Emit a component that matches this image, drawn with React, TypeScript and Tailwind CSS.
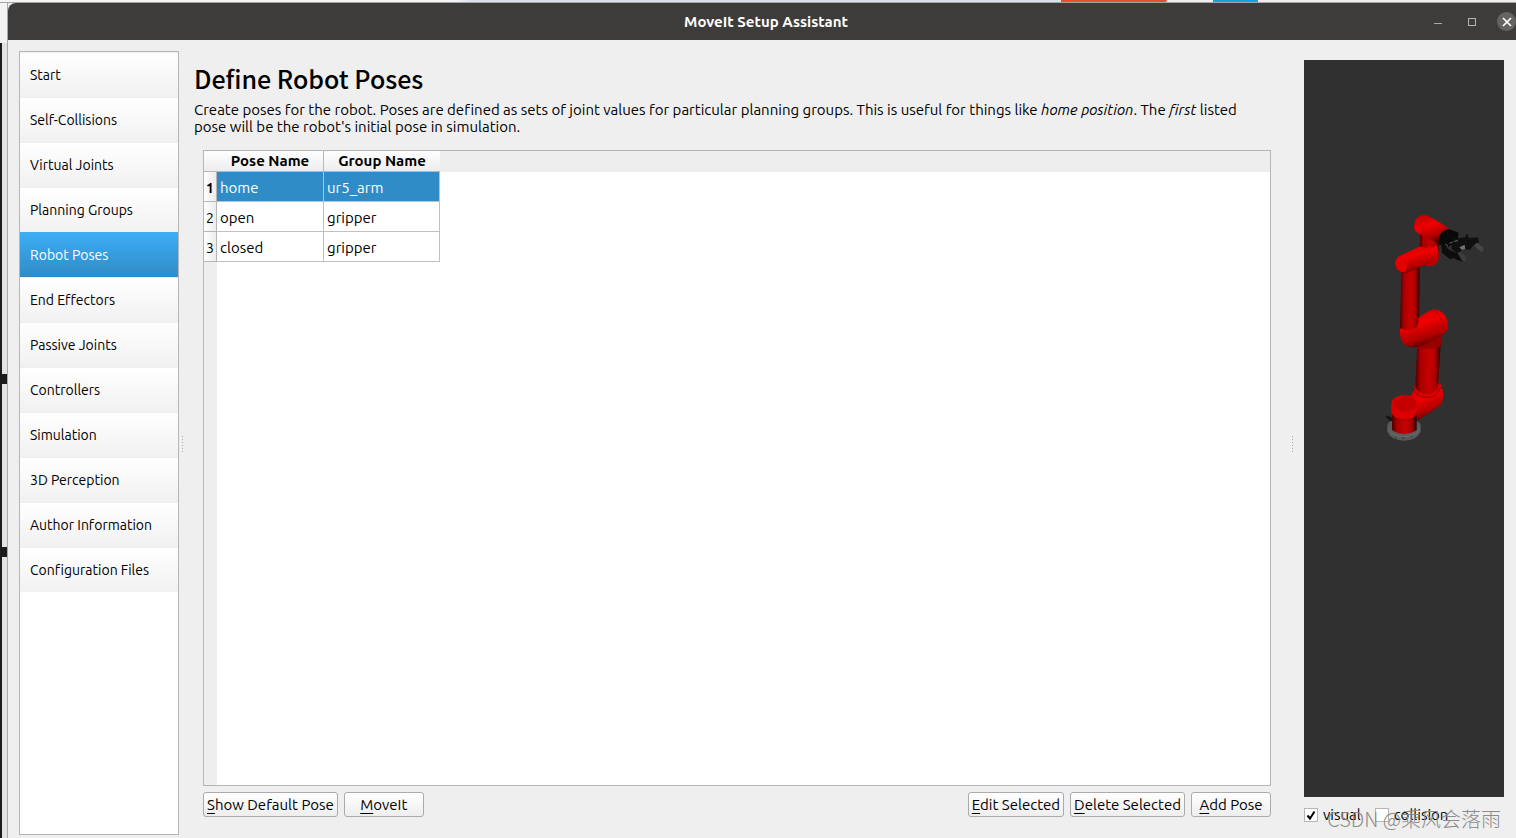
import { useState } from 'react'
import { clsx } from 'clsx'

const steps = [
  'Start',
  'Self-Collisions',
  'Virtual Joints',
  'Planning Groups',
  'Robot Poses',
  'End Effectors',
  'Passive Joints',
  'Controllers',
  'Simulation',
  '3D Perception',
  'Author Information',
  'Configuration Files',
]

const poses = [
  { name: 'home', group: 'ur5_arm' },
  { name: 'open', group: 'gripper' },
  { name: 'closed', group: 'gripper' },
]

function TitleBar() {
  return (
    <header className="grid h-[37px] shrink-0 grid-cols-[1fr_auto_1fr] items-center rounded-tl-lg bg-[#3e3c3a] pl-2">
      <span />
      <h1 className="pt-px text-[15px] font-bold text-white">MoveIt Setup Assistant</h1>
      <div className="flex items-center justify-end">
        <button aria-label="Minimize" className="flex size-[34px] items-center justify-center">
          <span className="mt-1 h-px w-2 bg-[#a9a8a7]" />
        </button>
        <button aria-label="Maximize" className="flex size-[34px] items-center justify-center">
          <span className="size-2 border border-[#b5b4b3]" />
        </button>
        <button aria-label="Close" className="ml-2 flex size-[19px] items-center justify-center rounded-full bg-[#656463]">
          <svg viewBox="0 0 10 10" className="size-[10px]" stroke="#fff" strokeWidth="1.7">
            <path d="M1 1l8 8M9 1l-8 8" />
          </svg>
        </button>
      </div>
    </header>
  )
}

function StepList({ active, onSelect }: { active: string; onSelect: (s: string) => void }) {
  return (
    <nav className="w-40 shrink-0 border border-[#b6b6b6] bg-white">
      <ul>
        {steps.map(step => (
          <li key={step}>
            <button
              onClick={() => onSelect(step)}
              className={clsx(
                'block h-[45px] w-full px-[10px] text-left text-sm',
                step === active
                  ? 'bg-linear-to-b from-[#3daef5] to-[#308cc6] text-white'
                  : 'border-t border-[#eee] bg-linear-to-b from-white to-[#f1f1f1]',
              )}
            >
              {step}
            </button>
          </li>
        ))}
      </ul>
    </nav>
  )
}

function SplitHandle() {
  return (
    <div className="flex w-[7px] shrink-0 flex-col items-center justify-center gap-[2px] pt-[2px]">
      {[0, 1, 2, 3, 4, 5].map(i => (
        <span key={i} className="size-px bg-[#a8a8a8]" />
      ))}
    </div>
  )
}

function PoseTable() {
  const [selected, setSelected] = useState(0)
  return (
    <div className="flex-1 border border-[#b6b6b6] bg-white bg-[linear-gradient(#eee,#eee),linear-gradient(#eee,#eee)] bg-[length:100%_21px,13px_100%] bg-no-repeat">
      <table className="w-[236px] table-fixed border-separate border-spacing-0 text-[15px] leading-5">
        <colgroup>
          <col className="w-[13px]" />
          <col className="w-[107px]" />
          <col className="w-[116px]" />
        </colgroup>
        <thead>
          <tr className="h-[21px] bg-linear-to-b from-white to-[#ececec]">
            <th className="border-b border-[#b6b6b6] p-0" />
            <th className="border-r border-b border-[#b6b6b6] p-0">Pose Name</th>
            <th className="border-b border-[#b6b6b6] p-0">Group Name</th>
          </tr>
        </thead>
        <tbody>
          {poses.map((pose, i) => (
            <tr
              key={pose.name}
              onClick={() => setSelected(i)}
              className={clsx('h-[30px]', i === selected && 'text-white')}
            >
              <th
                className={clsx(
                  'border-r border-b border-[#b6b6b6] bg-linear-to-r from-white to-[#ececec] px-0 pt-[2px] pb-0 text-sm text-black',
                  i === selected ? 'font-bold' : 'font-normal',
                )}
              >
                {i + 1}
              </th>
              <td
                className={clsx(
                  'border-r border-b border-[#c0c0c0] px-[3px] pt-[2px] pb-0',
                  i === selected && 'bg-[#308cc6]',
                )}
              >
                {pose.name}
              </td>
              <td
                className={clsx(
                  'border-r border-b border-[#c0c0c0] px-[3px] pt-[2px] pb-0',
                  i === selected && 'bg-[#308cc6]',
                )}
              >
                {pose.group}
              </td>
            </tr>
          ))}
        </tbody>
      </table>
    </div>
  )
}

function PushButton({ label }: { label: string }) {
  return (
    <button className="h-[25px] min-w-20 rounded-[3px] border border-[#ababab] bg-linear-to-b from-white to-[#eeeeee] px-[3px] pt-px text-[15px] whitespace-nowrap">
      <span className="underline underline-offset-3">{label[0]}</span>
      {label.slice(1)}
    </button>
  )
}

function RobotView() {
  return (
    <div className="min-h-0 flex-1 bg-[#303030]">
      <svg viewBox="0 0 200 737" className="h-full w-full" role="img" aria-label="Robot model">
        <defs>
          <linearGradient id="link" x1="0" x2="1" y1="0" y2="0">
            <stop offset="0" stopColor="#4a0000" />
            <stop offset="0.2" stopColor="#a80000" />
            <stop offset="0.55" stopColor="#c80000" />
            <stop offset="0.8" stopColor="#a80000" />
            <stop offset="1" stopColor="#200000" />
          </linearGradient>
          <linearGradient id="joint" x1="0.3" x2="0.7" y1="0" y2="1">
            <stop offset="0" stopColor="#c80000" />
            <stop offset="0.35" stopColor="#f00000" />
            <stop offset="0.7" stopColor="#b00000" />
            <stop offset="1" stopColor="#300000" />
          </linearGradient>
        </defs>
        <g transform="translate(66 140) scale(0.3333)">
          {/* base */}
          <path d="M49 646l20 8v14l-20-14z" fill="#141414" />
          <path d="M52 675Q54 660 102 656Q150 660 152 675V694Q142 722 102 722Q60 720 52 694Z" fill="#5a5a5a" />
          <path d="M54 685Q66 708 102 710Q140 708 150 685" fill="none" stroke="#6c6c6c" strokeWidth="3" />
          <path d="M74 712l6 3M96 714h8M122 712l6-3" stroke="#333" strokeWidth="3" />
          <path d="M120 590L142 556L205 553Q222 565 219 592Q218 612 205 620L142 662Z" fill="url(#joint)" />
          <path d="M66 630H140V690Q125 701 103 701Q80 701 66 690Z" fill="url(#link)" />
          <path d="M64 615Q64 588 104 586Q142 588 144 615L139 645Q125 660 103 660Q76 658 64 642Z" fill="#dc0000" />
          <ellipse cx="106" cy="612" rx="34" ry="23" fill="#c40000" />
          <path d="M64 640Q80 662 106 660Q132 658 140 640" fill="none" stroke="#800000" strokeWidth="2" />
          {/* upper arm */}
          <path d="M132 562Q134 588 170 594Q208 592 216 558L208 550H136Z" fill="#d90000" />
          <path d="M142 430H212L204 560Q194 582 170 582Q144 580 136 562Z" fill="url(#link)" />
          <path d="M133 568Q140 592 170 593Q204 592 212 562" fill="none" stroke="#7a0000" strokeWidth="2" />
          {/* elbow */}
          <path d="M140 430V443Q176 450 211 441L217 400Z" fill="#980000" />
          {/* forearm */}
          <path d="M94 205H149L147 395H90Z" fill="url(#link)" />
          <path d="M90 385Q88 420 104 434Q122 446 150 440L212 408Q237 395 234 372Q226 330 192 328Q178 329 145 354Q148 382 128 388Q108 394 90 385Z" fill="url(#joint)" />
          <path d="M190 330Q218 342 219 402" fill="none" stroke="#a80000" strokeWidth="2" />
          <path d="M196 352l3 3M184 370l4 2M202 376l3 3" stroke="#800000" strokeWidth="3" />
          {/* wrist */}
          <path d="M154 182Q162 199 182 198Q204 194 206 174V150H160Z" fill="#c40000" />
          <path d="M150 98L208 118L203 172H148Z" fill="url(#link)" />
          <path d="M84 170L150 139Q180 150 200 136Q210 154 196 182L112 218Q92 224 80 206Q70 186 84 170Z" fill="url(#joint)" />
          <ellipse cx="94" cy="194" rx="17" ry="23" transform="rotate(-22 94 194)" fill="#e20000" />
          <path d="M132 78Q134 46 163 45Q176 46 238 86Q206 92 208 132L150 103Q132 96 132 78Z" fill="url(#joint)" />
          <path d="M176 50Q156 66 156 106" fill="none" stroke="#b80000" strokeWidth="2" />
          {/* gripper */}
          <path d="M206 118Q210 90 236 87L266 98L262 126L234 140L208 134Z" fill="#090909" />
          <path d="M216 128L238 150L262 160L276 164L280 185L262 180L250 174L240 178L216 158L214 138Z" fill="#0d0d0d" />
          <path d="M250 116L286 112L290 100L298 114L324 112L326 128L308 138L300 150L282 146L262 160L244 146Z" fill="#101010" />
          <path d="M312 136L320 128L340 142V154L332 155Z" fill="#454545" />
          <path d="M262 158L272 156L290 172L286 186L276 182Z" fill="#3c3c3c" />
          <path d="M268 142L284 134L286 146L276 150Z" fill="#707070" />
          <path d="M226 132l8 6M238 130l10-4M252 124l12-2" stroke="#666" strokeWidth="3" />
        </g>
      </svg>
    </div>
  )
}

function ViewToggle({ label, defaultChecked }: { label: string; defaultChecked?: boolean }) {
  return (
    <label className="flex items-center gap-[5px] text-[15px]">
      <span className="grid size-[14px]">
        <input
          type="checkbox"
          defaultChecked={defaultChecked}
          className="peer col-start-1 row-start-1 size-[14px] appearance-none border border-[#b6b6b6] bg-white"
        />
        <svg
          viewBox="0 0 14 14"
          className="pointer-events-none invisible col-start-1 row-start-1 size-[14px] peer-checked:visible"
          fill="none"
          stroke="#000"
          strokeWidth="2"
        >
          <path d="M3.5 7.5L6 10.5L10.5 3.5" />
        </svg>
      </span>
      {label}
    </label>
  )
}

export default function App() {
  const [active, setActive] = useState('Robot Poses')

  return (
    <div className="flex min-h-screen flex-col bg-[#e9e9e9] font-['Ubuntu','Noto_Sans','Noto_Sans_CJK_SC',sans-serif] text-black [font-variant-ligatures:none]">
      {/* Desktop showing above the window */}
      <div className="flex h-[3px] shrink-0 border-b border-[#a5a5a5] bg-linear-to-r from-[#f5f5f5] from-30% to-[#dde1ea] to-31%">
        <div className="w-[70%]" />
        <div className="w-[7%] rounded-br-xs bg-[#e2512b]" />
        <div className="w-[3%] bg-[#eee]" />
        <div className="w-[3%] bg-[#12a5dc]" />
        <div className="flex-1 bg-[#eee]" />
      </div>

      <div className="flex flex-1">
        {/* Desktop showing left of the window */}
        <div className="flex w-2 shrink-0 flex-col border-r border-[#a9a9a9]">
          <div className="h-10 bg-[#f3f3f3]" />
          <div className="h-[331px] border-l-2 border-[#1c1a1c] bg-[#e2e2e2]" />
          <div className="h-[10px] bg-[#1c1a1c]" />
          <div className="h-[163px] border-l-2 border-[#1c1a1c] bg-[#e2e2e2]" />
          <div className="h-[10px] bg-[#1c1a1c]" />
          <div className="flex-1 border-l-2 border-[#1c1a1c] bg-[#e2e2e2]" />
        </div>

        <div className="flex min-w-0 flex-1 flex-col">
          <TitleBar />
          <div className="flex flex-1 bg-[#efefef] pt-[11px] pr-3 pb-[3px] pl-[11px]">
            <StepList active={active} onSelect={setActive} />
            <SplitHandle />

            <main className="flex min-w-0 flex-1 flex-col pr-[18px] pb-[18px] pl-2">
              <h2 className="mt-[11px] font-['Noto_Sans_CJK_SC',sans-serif] text-[25px] leading-8 font-medium">
                Define Robot Poses
              </h2>
              <p className="mt-[7px] mb-[15px] text-[15px] leading-[17px]">
                Create poses for the robot. Poses are defined as sets of joint values for particular planning groups. This
                is useful for things like <em>home position</em>. The <em>first</em> listed pose will be the robot's
                initial pose in simulation.
              </p>
              <div className="flex flex-1 flex-col pl-[9px]">
                <PoseTable />
                <div className="mt-[6px] flex gap-[6px]">
                  <PushButton label="Show Default Pose" />
                  <PushButton label="MoveIt" />
                  <span className="flex-1" />
                  <PushButton label="Edit Selected" />
                  <PushButton label="Delete Selected" />
                  <PushButton label="Add Pose" />
                </div>
              </div>
            </main>

            <SplitHandle />
            <aside className="relative ml-2 flex w-[200px] shrink-0 flex-col pt-[9px]">
              <RobotView />
              <div className="flex h-[38px] items-center gap-[14px] pb-[2px]">
                <ViewToggle label="visual" defaultChecked />
                <ViewToggle label="collision" />
              </div>
              <span className="pointer-events-none absolute right-[3px] bottom-1 font-['Noto_Sans_CJK_SC',sans-serif] text-xl leading-6 font-light whitespace-nowrap text-[#8c8c8c]">
                CSDN @乘风会落雨
              </span>
            </aside>
          </div>
        </div>
      </div>
    </div>
  )
}
